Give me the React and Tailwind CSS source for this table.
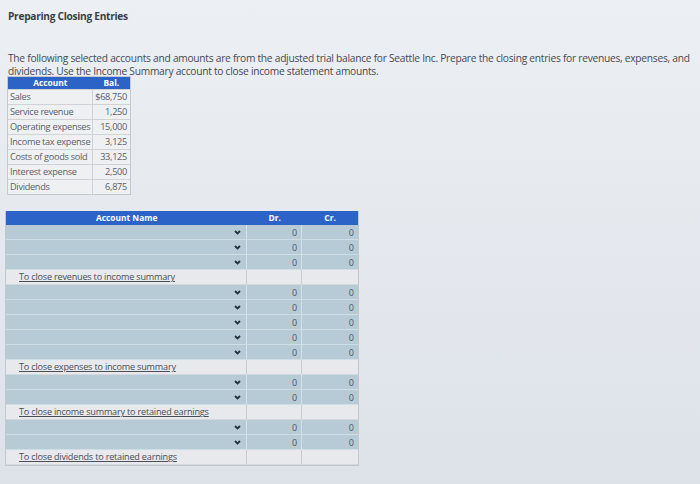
import React from 'react';

// Trial balance figures shown in the small reference table
const balances = [
  ['Sales', '$68,750'],
  ['Service revenue', '1,250'],
  ['Operating expenses', '15,000'],
  ['Income tax expense', '3,125'],
  ['Costs of goods sold', '33,125'],
  ['Interest expense', '2,500'],
  ['Dividends', '6,875'],
];

// Journal sections: number of input rows followed by the description line
const sections = [
  { rows: 3, label: 'To close revenues to income summary' },
  { rows: 5, label: 'To close expenses to income summary' },
  { rows: 2, label: 'To close income summary to retained earnings' },
  { rows: 2, label: 'To close dividends to retained earnings' },
];

function Chevron() {
  return (
    <svg width="7" height="5" viewBox="0 0 7 5" className="text-[#25313d]">
      <path d="M1 1l2.5 2.5L6 1" fill="none" stroke="currentColor" strokeWidth="1.8" />
    </svg>
  );
}

function InputRow() {
  return (
    <div className="flex h-[15px] bg-[#b6cbd6] border-b border-[#cfdde4]">
      <div className="w-[242px] flex items-center justify-end pr-[5px] border-r border-[#d6e0e6]">
        <Chevron />
      </div>
      <div className="w-[55px] flex items-center justify-end pr-[4px] border-r border-[#d6e0e6] text-[9px] text-[#4a5866]">0</div>
      <div className="w-[56px] flex items-center justify-end pr-[4px] text-[9px] text-[#4a5866]">0</div>
    </div>
  );
}

function LabelRow({ label }) {
  return (
    <div className="flex h-[15px] bg-[#e7e9ec] border-b border-[#d4d8dc]">
      <div className="w-[242px] flex items-center pl-[13px] border-r border-[#c9cdd2]">
        <span className="text-[9.1px] text-[#4b4f55] underline tracking-[-0.2px] whitespace-nowrap">{label}</span>
      </div>
      <div className="w-[55px] border-r border-[#c9cdd2]"></div>
      <div className="w-[56px]"></div>
    </div>
  );
}

export default function App() {
  return (
    <div
      className="w-[700px] h-[484px] overflow-hidden bg-gradient-to-b from-[#eceff3] to-[#dde2e9] text-[#3d4248]"
      style={{ fontFamily: '"Open Sans", "Liberation Sans", sans-serif' }}
    >
      <div className="pl-[8px] pt-[9px] text-[10.2px] font-bold text-[#3a3f45] tracking-[-0.3px]">Preparing Closing Entries</div>

      <div className="pl-[8px] pt-[28px] text-[10.2px] leading-[13px] text-[#444a51] tracking-[-0.25px] whitespace-nowrap">
        The following selected accounts and amounts are from the adjusted trial balance for Seattle Inc. Prepare the closing entries for revenues, expenses, and
        <br />
        dividends. Use the Income Summary account to close income statement amounts.
      </div>

      {/* Trial balance table */}
      <div className="ml-[7px] mt-[-2px] w-[124px] border border-[#c5cad0] bg-[#eef0f2]">
        <div className="flex h-[12px] bg-[#2c63c6] text-white text-[8.4px] font-bold">
          <div className="w-[86px] flex items-center justify-center">Account</div>
          <div className="w-[38px] flex items-center justify-center">Bal.</div>
        </div>
        {balances.map(([name, bal]) => (
          <div key={name} className="flex h-[15px] border-t border-[#cfd3d8] text-[9.2px] text-[#5a6068] tracking-[-0.3px]">
            <div className="w-[86px] flex items-center pl-[2px] border-r border-[#cfd3d8] whitespace-nowrap">{name}</div>
            <div className="w-[38px] flex items-center justify-end pr-[3px]">{bal}</div>
          </div>
        ))}
      </div>

      {/* Journal entry table */}
      <div className="ml-[5px] mt-[16px] w-[354px] border-l border-r border-b border-[#c3c8ce]">
        <div className="flex h-[14px] bg-[#2c63c6] text-white text-[8.4px] font-bold">
          <div className="w-[242px] flex items-center justify-center">Account Name</div>
          <div className="w-[55px] flex items-center justify-center">Dr.</div>
          <div className="w-[56px] flex items-center justify-center">Cr.</div>
        </div>
        {sections.map((s) => (
          <React.Fragment key={s.label}>
            {Array.from({ length: s.rows }).map((_, i) => (
              <InputRow key={i} />
            ))}
            <LabelRow label={s.label} />
          </React.Fragment>
        ))}
      </div>
    </div>
  );
}
